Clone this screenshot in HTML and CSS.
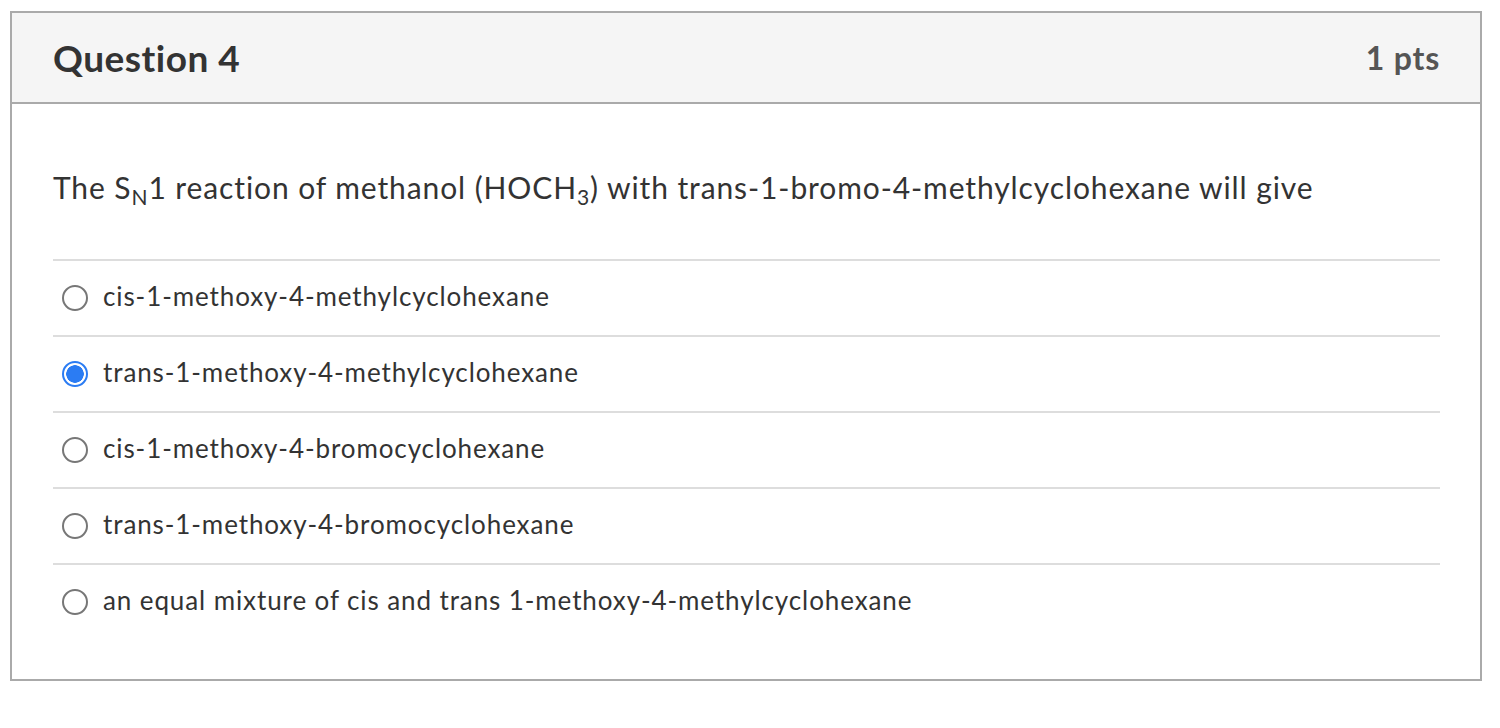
FILE: index.html
```html
<!DOCTYPE html>
<html>
<head>
<meta charset="utf-8">
<link rel="stylesheet" href="styles.css">
</head>
<body>
<div class="card">
  <div class="header">
    <h2 class="title">Question 4</h2>
    <div class="pts">1 pts</div>
  </div>
  <div class="content">
    <p class="question">The S<sub>N</sub>1 reaction of methanol (HOCH<sub>3</sub>) with trans-1-bromo-4-methylcyclohexane will give</p>
    <div class="answers">
      <div class="answer"><span class="radio"></span><span class="label">cis-1-methoxy-4-methylcyclohexane</span></div>
      <div class="answer"><span class="radio checked"></span><span class="label">trans-1-methoxy-4-methylcyclohexane</span></div>
      <div class="answer"><span class="radio"></span><span class="label">cis-1-methoxy-4-bromocyclohexane</span></div>
      <div class="answer"><span class="radio"></span><span class="label">trans-1-methoxy-4-bromocyclohexane</span></div>
      <div class="answer"><span class="radio"></span><span class="label">an equal mixture of cis and trans 1-methoxy-4-methylcyclohexane</span></div>
    </div>
  </div>
</div>
</body>
</html>
```
FILE: styles.css
```css
html, body {
  margin: 0;
  padding: 0;
  background: #fff;
}
body {
  font-family: Lato, "Open Sans", sans-serif;
  color: #333;
}
.card {
  margin: 11px 0 0 10px;
  width: 1468px;
  border: 2px solid #aaaaaa;
}
.header {
  display: flex;
  justify-content: space-between;
  align-items: center;
  height: 89px;
  padding: 0 40px 0 41px;
  background: #f5f5f5;
  border-bottom: 2px solid #aaaaaa;
}
.title {
  margin: 0;
  font-size: 37px;
  font-weight: 700;
  letter-spacing: 0.5px;
  color: #333;
}
.pts {
  font-size: 32px;
  font-weight: 700;
  letter-spacing: 0.8px;
  color: #555;
}
.content {
  padding: 0 40px 40px 41px;
}
.question {
  margin: 0;
  padding: 61px 0 50px;
  font-size: 30px;
  line-height: 44px;
  letter-spacing: 0.9px;
  color: #333;
}
.question sub {
  font-size: 21px;
  vertical-align: -6px;
  line-height: 0;
}
.answer {
  display: flex;
  align-items: center;
  gap: 15px;
  height: 74px;
  border-top: 2px solid #dddddd;
  padding-left: 9px;
}
.radio {
  box-sizing: border-box;
  width: 26px;
  height: 26px;
  border: 2px solid #777;
  border-radius: 50%;
  flex: none;
  background: #fff;
}
.radio.checked {
  border-color: #2b7cf3;
  background: radial-gradient(circle, #2b7cf3 0 8.5px, #fff 9px);
}
.label {
  font-size: 26px;
  letter-spacing: 0.9px;
  color: #333;
  position: relative;
  top: -2px;
}
```
